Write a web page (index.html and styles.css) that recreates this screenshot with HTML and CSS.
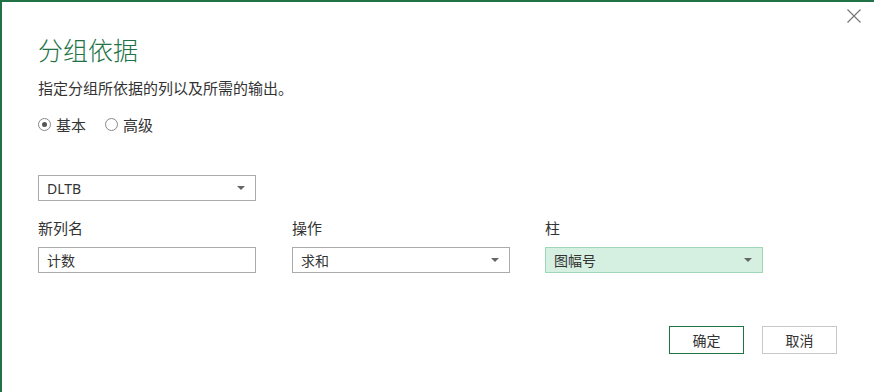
FILE: index.html
```html
<!DOCTYPE html>
<html lang="zh">
<head>
<meta charset="utf-8">
<link rel="stylesheet" href="styles.css">
</head>
<body>
<div class="dialog">
  <button class="close" aria-label="关闭">
    <svg width="14" height="14" viewBox="0 0 14 14"><path d="M0.5 0.5 L13.5 13.5 M13.5 0.5 L0.5 13.5" stroke="#777" stroke-width="1.2" fill="none"/></svg>
  </button>
  <h1 class="title">分组依据</h1>
  <p class="desc">指定分组所依据的列以及所需的输出。</p>
  <div class="radios">
    <label class="radio"><span class="dot checked"></span>基本</label>
    <label class="radio"><span class="dot"></span>高级</label>
  </div>
  <div class="select group-select"><span>DLTB</span><span class="caret"></span></div>
  <div class="fields">
    <div class="field">
      <div class="label">新列名</div>
      <div class="input">计数</div>
    </div>
    <div class="field">
      <div class="label">操作</div>
      <div class="select"><span>求和</span><span class="caret"></span></div>
    </div>
    <div class="field">
      <div class="label">柱</div>
      <div class="select active"><span>图幅号</span><span class="caret"></span></div>
    </div>
  </div>
  <div class="actions">
    <button class="btn primary">确定</button>
    <button class="btn">取消</button>
  </div>
</div>
</body>
</html>
```
FILE: styles.css
```css
* { box-sizing: border-box; }
html, body { margin: 0; padding: 0; background: #fff; }
body { font-family: "Noto Sans CJK SC", "Noto Sans", sans-serif; color: #333; }
.dialog {
  position: relative;
  width: 874px;
  height: 392px;
  border-top: 2px solid #217346;
  border-left: 2px solid #217346;
  padding: 0 0 0 36px;
}
.close {
  position: absolute;
  top: 7px;
  right: 13px;
  border: none;
  background: none;
  padding: 0;
  width: 14px;
  height: 14px;
  display: block;
}
.close svg { display: block; }
.title {
  margin: 0;
  padding-top: 29px;
  font-size: 25px;
  font-weight: 300;
  line-height: 36px;
  color: #217346;
}
.desc {
  margin: 10px 0 0;
  font-size: 15px;
  line-height: 22px;
  color: #333;
}
.radios {
  display: flex;
  gap: 19px;
  margin-top: 14px;
  height: 22px;
  align-items: center;
}
.radio {
  display: flex;
  align-items: center;
  font-size: 15px;
  color: #333;
}
.dot {
  width: 13px;
  height: 13px;
  border: 1px solid #888;
  border-radius: 50%;
  margin-right: 5px;
  position: relative;
  background: #fff;
}
.dot.checked::after {
  content: "";
  position: absolute;
  left: 3px; top: 3px;
  width: 5px; height: 5px;
  border-radius: 50%;
  background: #555;
}
.select, .input {
  width: 218px;
  height: 26px;
  border: 1px solid #ababab;
  display: flex;
  align-items: center;
  justify-content: space-between;
  padding: 0 10px 0 8px;
  font-size: 14px;
  color: #333;
  background: #fff;
}
.group-select { margin-top: 40px; }
.group-select span:first-child { font-family: "Noto Sans", sans-serif; font-size: 14px; }
.caret {
  width: 0; height: 0;
  border-left: 4px solid transparent;
  border-right: 4px solid transparent;
  border-top: 4px solid #666;
}
.select.active {
  background: #d5efe0;
  border-color: #9fd6b8;
}
.fields {
  display: flex;
  margin-top: 16px;
}
.field { width: 254px; }
.field:nth-child(2) { width: 253px; }
.label {
  font-size: 15px;
  line-height: 22px;
  height: 22px;
  margin-bottom: 8px;
}
.actions {
  display: flex;
  justify-content: flex-end;
  gap: 18px;
  margin-top: 53px;
  padding-right: 37px;
}
.btn {
  width: 75px;
  height: 28px;
  border: 1px solid #c8c8c8;
  background: #fff;
  font-family: "Noto Sans CJK SC", sans-serif;
  font-size: 14px;
  color: #333;
  padding: 0;
}
.btn.primary {
  border-color: #217346;
}
```
